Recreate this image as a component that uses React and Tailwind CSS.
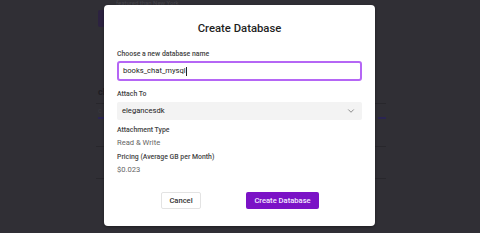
import { ChevronDown } from 'lucide-react'

const font = { fontFamily: 'Roboto, "Noto Sans", sans-serif' }

function Field({ label, children, className = '' }) {
  return (
    <div className={className}>
      <p className="text-[6.9px] leading-[10px] font-medium text-[#444]">{label}</p>
      {children}
    </div>
  )
}

export default function App() {
  return (
    <div className="relative h-[233px] w-[480px] overflow-hidden bg-[#302f35]" style={font}>
      {/* page behind the overlay */}
      <div className="ml-[96px] w-[290px]">
        <p className="pl-[20px] text-[6px] leading-[5px] text-[#46454b]">featured than New York</p>
        <div className="mt-[5px] ml-[2px] h-[17px] w-[30px] rounded-[2px] bg-[#2c2240]" />
        <div className="mt-[60px] ml-[2px] text-[9px] font-bold leading-[10px] text-[#1f1e23]">ch</div>
        <div className="mt-[6px] h-px w-full bg-[#28272c]" />
        <div className="mt-[3px] ml-[2px] text-[7px] leading-[8px] text-[#3a393f]">c</div>
        <div className="mt-[2px] flex justify-between">
          <div className="ml-[2px] h-[2px] w-[8px] bg-[#2a2452]" />
          <div className="h-[2px] w-[8px] bg-[#2a2452]" />
        </div>
        <div className="mt-[27px] h-px w-full bg-[#28272c]" />
        <div className="mt-[31px] h-px w-full bg-[#28272c]" />
      </div>

      {/* overlay + modal */}
      <div className="absolute inset-0">
        <div className="ml-[104px] mt-[5px] h-[221px] w-[271px] rounded-[4px] bg-white px-[13px] shadow-[0_1px_3px_rgba(0,0,0,0.4)]">
          <h1 className="pt-[17px] text-center text-[11.3px] font-medium leading-[14px] text-[#1f1f1f]">
            Create Database
          </h1>

          <Field label="Choose a new database name" className="mt-[13px]">
            <div className="mt-[2px] flex h-[20px] items-center rounded-[3px] border-2 border-[#b566f5] px-[4px]">
              <span className="text-[7.6px] leading-[10px] text-[#222]">books_chat_mysql</span>
              <span className="ml-[0.5px] h-[9px] w-px bg-[#222]" />
            </div>
          </Field>

          <Field label="Attach To" className="mt-[8px]">
            <div className="mt-[3px] flex h-[18px] items-center justify-between rounded-[2px] bg-[#f3f3f3] pl-[5px] pr-[6px]">
              <span className="text-[7.6px] leading-[10px] text-[#222]">elegancesdk</span>
              <ChevronDown size={10} strokeWidth={2} className="text-[#777]" />
            </div>
          </Field>

          <Field label="Attachment Type" className="mt-[5px]">
            <p className="mt-[2px] text-[7.6px] leading-[12px] text-[#666]">Read &amp; Write</p>
          </Field>

          <Field label="Pricing (Average GB per Month)" className="mt-[3px]">
            <p className="mt-[2px] text-[7.6px] leading-[12px] text-[#666]">$0.023</p>
          </Field>

          <div className="mt-[16px] flex gap-[45px] pl-[44px]">
            <button className="h-[17px] w-[40px] rounded-[2px] border border-[#e3e3e3] bg-white text-[7.6px] font-medium text-[#333]">
              Cancel
            </button>
            <button className="h-[17px] w-[73px] rounded-[2px] bg-[#7b12c6] text-[7.6px] font-medium text-[#f4eaff]">
              Create Database
            </button>
          </div>
        </div>
      </div>
    </div>
  )
}
